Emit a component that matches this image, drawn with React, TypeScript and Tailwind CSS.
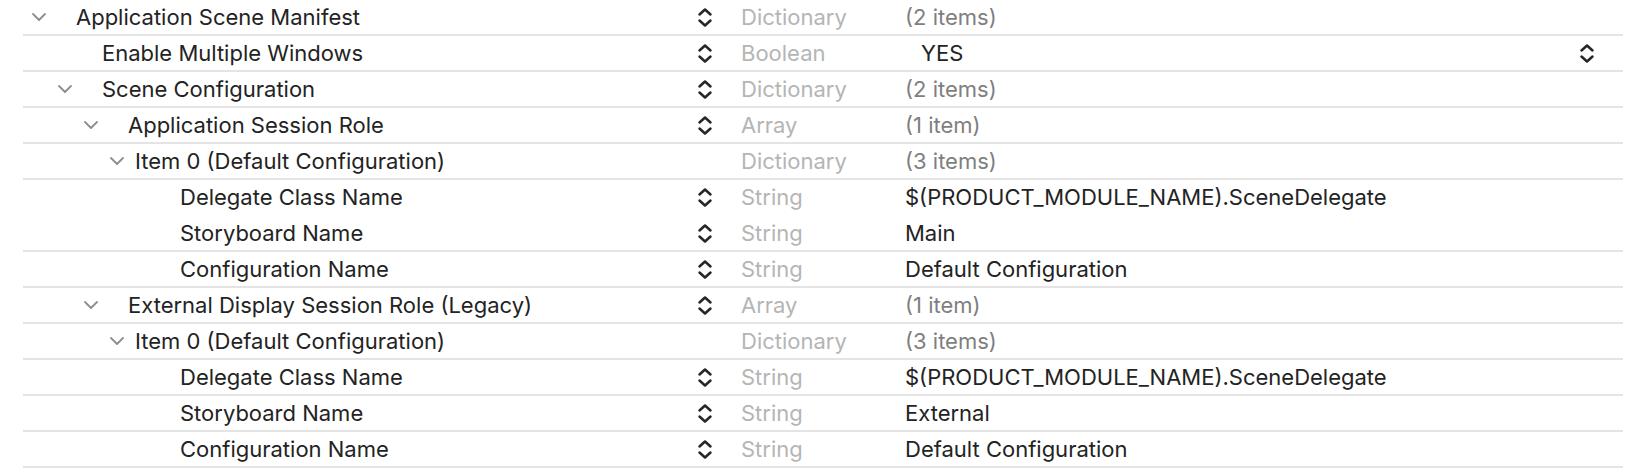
import React from "react";

type Row = {
  name: string;
  pad: string;
  chevron?: string;
  stepper: boolean;
  type: string;
  value: string;
  dark?: boolean;
  valuePad?: string;
  valueStepper?: boolean;
  noBorder?: boolean;
};

const rows: Row[] = [
  { name: "Application Scene Manifest", pad: "pl-[9px]", chevron: "ml-[30px]", stepper: true, type: "Dictionary", value: "(2 items)" },
  { name: "Enable Multiple Windows", pad: "pl-[79px]", stepper: true, type: "Boolean", value: "YES", dark: true, valuePad: "pl-[16px]", valueStepper: true },
  { name: "Scene Configuration", pad: "pl-[35px]", chevron: "ml-[30px]", stepper: true, type: "Dictionary", value: "(2 items)" },
  { name: "Application Session Role", pad: "pl-[61px]", chevron: "ml-[30px]", stepper: true, type: "Array", value: "(1 item)" },
  { name: "Item 0 (Default Configuration)", pad: "pl-[87px]", chevron: "ml-[11px]", stepper: false, type: "Dictionary", value: "(3 items)" },
  { name: "Delegate Class Name", pad: "pl-[157px]", stepper: true, type: "String", value: "$(PRODUCT_MODULE_NAME).SceneDelegate", dark: true, noBorder: true },
  { name: "Storyboard Name", pad: "pl-[157px]", stepper: true, type: "String", value: "Main", dark: true },
  { name: "Configuration Name", pad: "pl-[157px]", stepper: true, type: "String", value: "Default Configuration", dark: true },
  { name: "External Display Session Role (Legacy)", pad: "pl-[61px]", chevron: "ml-[30px]", stepper: true, type: "Array", value: "(1 item)" },
  { name: "Item 0 (Default Configuration)", pad: "pl-[87px]", chevron: "ml-[11px]", stepper: false, type: "Dictionary", value: "(3 items)" },
  { name: "Delegate Class Name", pad: "pl-[157px]", stepper: true, type: "String", value: "$(PRODUCT_MODULE_NAME).SceneDelegate", dark: true },
  { name: "Storyboard Name", pad: "pl-[157px]", stepper: true, type: "String", value: "External", dark: true },
  { name: "Configuration Name", pad: "pl-[157px]", stepper: true, type: "String", value: "Default Configuration", dark: true },
];

const Disclosure = () => (
  <svg width="14" height="8" viewBox="0 0 14 8" className="shrink-0">
    <path d="M1 1 L7 7 L13 1" fill="none" stroke="#8e8e8e" strokeWidth="1.8" strokeLinecap="round" strokeLinejoin="round" />
  </svg>
);

const Stepper = () => (
  <svg width="16" height="21" viewBox="0 0 16 21" className="shrink-0">
    <path d="M2.5 7.5 L8 2.5 L13.5 7.5" fill="none" stroke="#262626" strokeWidth="2.5" strokeLinecap="round" strokeLinejoin="round" />
    <path d="M2.5 13.5 L8 18.5 L13.5 13.5" fill="none" stroke="#262626" strokeWidth="2.5" strokeLinecap="round" strokeLinejoin="round" />
  </svg>
);

export default function App() {
  return (
    <div className="w-[1647px] h-[471px] bg-white overflow-hidden font-['Inter','Noto_Sans',sans-serif] text-[22px] text-[#232323]">
      {rows.map((r, i) => (
        <div
          key={i}
          className={`ml-[23px] w-[1600px] h-[36px] flex items-center ${r.noBorder ? "border-b-2 border-transparent" : "border-b-2 border-[#e4e4e4]"}`}
        >
          <div className={`w-[674px] shrink-0 flex items-center ${r.pad}`}>
            {r.chevron && <Disclosure />}
            <span className={`whitespace-nowrap ${r.chevron ?? ""}`}>{r.name}</span>
          </div>
          <div className="w-[16px] shrink-0 flex items-center justify-center">{r.stepper && <Stepper />}</div>
          <div className="w-[192px] shrink-0 pl-[28px] text-[#b5b5b5] whitespace-nowrap">{r.type}</div>
          <div className={`flex-1 flex items-center justify-between pr-[28px] ${r.valuePad ?? ""}`}>
            <span className={`whitespace-nowrap ${r.dark ? "text-[#232323]" : "text-[#7f7f7f]"}`}>{r.value}</span>
            {r.valueStepper && <Stepper />}
          </div>
        </div>
      ))}
    </div>
  );
}
